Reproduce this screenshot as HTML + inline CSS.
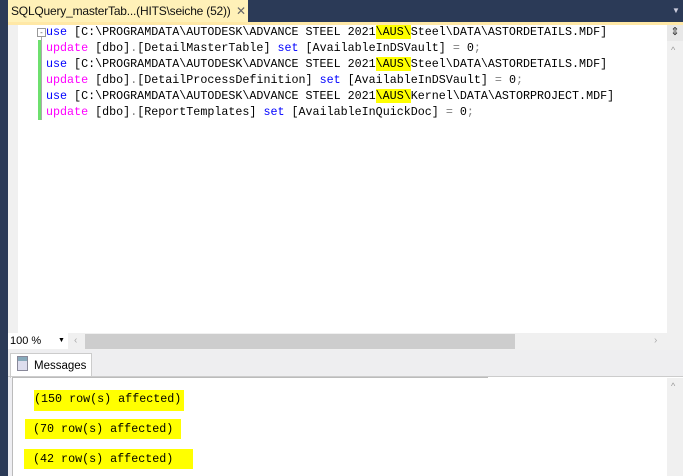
<!DOCTYPE html>
<html><head><style>
body{margin:0;width:683px;height:476px;overflow:hidden;background:#eeeef2;font-family:"Liberation Sans",sans-serif;position:relative}
.abs{position:absolute}
.code{font-family:"Liberation Mono",monospace;font-size:11.7px;line-height:16px;white-space:pre}
.k{color:#0000ff}.m{color:#ff00ff}.g{color:#808080}.h{background:#ffff00}
</style></head><body>
<div class="abs" style="left:0;top:0;width:8px;height:476px;background:#2b3a57"></div>
<div class="abs" style="left:8px;top:0;width:675px;height:22px;background:#2b3a57"></div>
<div class="abs" style="left:8px;top:0;width:240px;height:22px;background:#fff1b8;font-size:12px;line-height:22px;color:#111;white-space:nowrap;letter-spacing:-0.2px"><span style="position:absolute;left:3px">SQLQuery_masterTab...(HITS\seiche (52))</span><span style="position:absolute;left:228px;color:#666">✕</span></div>
<div class="abs" style="left:8px;top:22px;width:675px;height:3px;background:#ffe8a6"></div>
<div class="abs" style="left:672px;top:6px;color:#ccd;font-size:8px">▼</div>
<div class="abs" style="left:8px;top:25px;width:675px;height:308px;background:#fff"></div>
<div class="abs" style="left:8px;top:25px;width:10px;height:308px;background:#f0f0f0"></div>
<div class="abs" style="left:38px;top:40px;width:4px;height:80px;background:#6ee06e"></div>
<div class="abs" style="left:37px;top:28px;width:7px;height:7px;border:1px solid #999;background:#fff;font-size:8px;line-height:7px;text-align:center;color:#555">-</div>
<div class="abs" style="left:41px;top:37px;width:1px;height:83px;background:#aaa"></div>
<div class="abs code" style="left:46px;top:24px"><span class="k">use</span> [C:\PROGRAMDATA\AUTODESK\ADVANCE STEEL 2021<span class="h">\AUS\</span>Steel\DATA\ASTORDETAILS.MDF]
<span class="m">update</span> [dbo]<span class="g">.</span>[DetailMasterTable] <span class="k">set</span> [AvailableInDSVault] <span class="g">=</span> 0<span class="g">;</span>
<span class="k">use</span> [C:\PROGRAMDATA\AUTODESK\ADVANCE STEEL 2021<span class="h">\AUS\</span>Steel\DATA\ASTORDETAILS.MDF]
<span class="m">update</span> [dbo]<span class="g">.</span>[DetailProcessDefinition] <span class="k">set</span> [AvailableInDSVault] <span class="g">=</span> 0<span class="g">;</span>
<span class="k">use</span> [C:\PROGRAMDATA\AUTODESK\ADVANCE STEEL 2021<span class="h">\AUS\</span>Kernel\DATA\ASTORPROJECT.MDF]
<span class="m">update</span> [dbo]<span class="g">.</span>[ReportTemplates] <span class="k">set</span> [AvailableInQuickDoc] <span class="g">=</span> 0<span class="g">;</span></div>
<div class="abs" style="left:667px;top:25px;width:16px;height:308px;background:#f0f0f0"></div>
<div class="abs" style="left:667px;top:25px;width:16px;height:16px;background:#e8e8e8;font-size:11px;text-align:center;color:#333">⇕</div>
<div class="abs" style="left:671px;top:45px;font-size:9px;color:#999">^</div>
<div class="abs" style="left:8px;top:333px;width:675px;height:17px;background:#f0f0f0"></div>
<div class="abs" style="left:8px;top:333px;width:60px;height:16px;background:#fff;font-size:11px;line-height:16px"><span style="padding-left:2px">100 %</span><span style="position:absolute;left:50px;font-size:7px">▼</span></div>
<div class="abs" style="left:74px;top:335px;font-size:10px;color:#aaa">‹</div>
<div class="abs" style="left:85px;top:334px;width:430px;height:15px;background:#cdcdcd"></div>
<div class="abs" style="left:654px;top:335px;font-size:10px;color:#aaa">›</div>
<div class="abs" style="left:8px;top:350px;width:675px;height:27px;background:#eeeef0"></div>
<div class="abs" style="left:10px;top:353px;width:80px;height:24px;background:#fff;border:1px solid #ccc;border-bottom:none;font-size:11.5px;line-height:24px"><span style="display:inline-block;width:9px;height:13px;margin:0 6px 0 6px;vertical-align:-2px;background:linear-gradient(#8ab 0 30%,#dde 30%);border:1px solid #889"></span>Messages</div>
<div class="abs" style="left:8px;top:376px;width:675px;height:1px;background:#ccc"></div>
<div class="abs" style="left:12px;top:377px;width:671px;height:99px;background:#fff;border-left:1px solid #bbb"></div>
<div class="abs" style="left:13px;top:377px;width:475px;height:1px;background:#bbb"></div>
<div class="abs" style="left:667px;top:378px;width:16px;height:98px;background:#f0f0f0"></div>
<div class="abs" style="left:671px;top:381px;font-size:9px;color:#999">^</div>
<div class="abs code" style="left:34px;top:390px;line-height:19px;color:#000;background:#ffff00;padding:0 3px 2px 0">(150 row(s) affected)</div>
<div class="abs code" style="left:25px;top:419px;line-height:20px;color:#000;background:#ffff00;padding:0 8px 0 8px">(70 row(s) affected)</div>
<div class="abs code" style="left:24px;top:449px;line-height:20px;color:#000;background:#ffff00;padding:0 20px 0 9px">(42 row(s) affected)</div>
</body></html>
